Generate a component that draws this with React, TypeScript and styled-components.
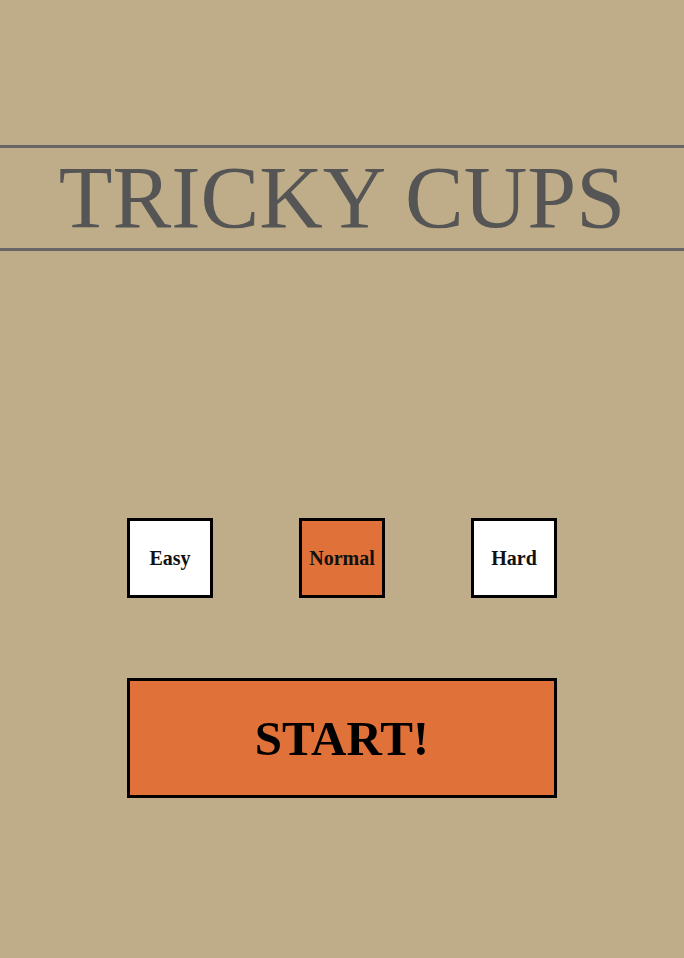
import React, { useState } from 'react';
import styled, { createGlobalStyle } from 'styled-components';

const GlobalStyle = createGlobalStyle`
  html, body {
    margin: 0;
    padding: 0;
    background: #bfad89;
  }
  body {
    font-family: "Liberation Serif", "Times New Roman", serif;
  }
`;

const Screen = styled.div`
  min-height: 958px;
  display: flex;
  flex-direction: column;
  align-items: center;
  padding-top: 145px;
  box-sizing: border-box;
`;

const TitleBand = styled.header`
  width: 100%;
  height: 106px;
  box-sizing: border-box;
  border-top: 3px solid #666666;
  border-bottom: 3px solid #666666;
  display: flex;
  align-items: center;
  justify-content: center;
`;

const Title = styled.h1`
  margin: 0;
  font-size: 88px;
  font-weight: normal;
  line-height: 1;
  color: #555555;
`;

const Controls = styled.div`
  width: 430px;
  margin-top: 267px;
  display: flex;
  flex-direction: column;
  gap: 80px;
`;

const LevelRow = styled.div`
  display: flex;
  justify-content: space-between;
`;

const LevelButton = styled.button<{ $active: boolean }>`
  width: 86px;
  height: 80px;
  box-sizing: border-box;
  border: 3px solid #000;
  padding: 0;
  background: ${(p) => (p.$active ? '#e07138' : '#ffffff')};
  font-family: "Liberation Serif", "Times New Roman", serif;
  font-size: 20px;
  font-weight: bold;
  color: #111;
  cursor: pointer;
`;

const StartButton = styled.button`
  width: 100%;
  height: 120px;
  box-sizing: border-box;
  border: 3px solid #000;
  background: #e07138;
  font-family: "Liberation Serif", "Times New Roman", serif;
  font-size: 49px;
  font-weight: bold;
  color: #000;
  cursor: pointer;
`;

const levels = ['Easy', 'Normal', 'Hard'];

export default function App() {
  const [level, setLevel] = useState('Normal');

  return (
    <>
      <GlobalStyle />
      <Screen>
        <TitleBand>
          <Title>TRICKY CUPS</Title>
        </TitleBand>
        <Controls>
          <LevelRow>
            {levels.map((l) => (
              <LevelButton key={l} $active={l === level} onClick={() => setLevel(l)}>
                {l}
              </LevelButton>
            ))}
          </LevelRow>
          <StartButton>START!</StartButton>
        </Controls>
      </Screen>
    </>
  );
}
